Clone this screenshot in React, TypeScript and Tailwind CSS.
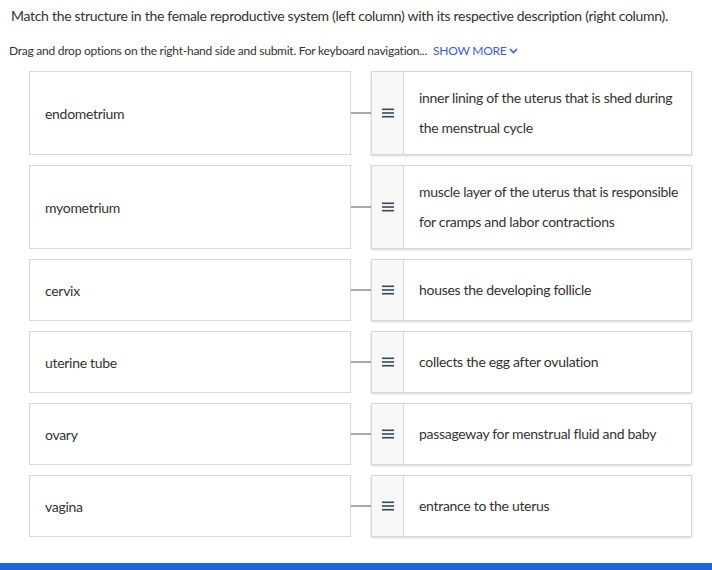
export default function App() {
  const rows = [
    { term: 'endometrium', desc: ['inner lining of the uterus that is shed during', 'the menstrual cycle'] },
    { term: 'myometrium', desc: ['muscle layer of the uterus that is responsible', 'for cramps and labor contractions'] },
    { term: 'cervix', desc: ['houses the developing follicle'] },
    { term: 'uterine tube', desc: ['collects the egg after ovulation'] },
    { term: 'ovary', desc: ['passageway for menstrual fluid and baby'] },
    { term: 'vagina', desc: ['entrance to the uterus'] },
  ]

  return (
    <div className="w-[712px] h-[570px] bg-white relative overflow-hidden text-[#333] font-['Lato','Liberation_Sans',sans-serif]">
      <p className="pl-[11px] pt-[7px] text-[14px] leading-[18px] tracking-[-0.3px] whitespace-nowrap">
        Match the structure in the female reproductive system (left column) with its respective description (right column).
      </p>
      <p className="pl-[9px] mt-[18px] text-[12px] leading-[16px] tracking-[-0.25px] flex items-center whitespace-nowrap">
        Drag and drop options on the right-hand side and submit. For keyboard navigation...
        <span className="ml-[6px] text-[#3b5fd0] flex items-center gap-[3px]">
          SHOW MORE
          <svg width="9" height="6" viewBox="0 0 9 6" fill="none">
            <path d="M1 1l3.5 3.5L8 1" stroke="#3b5fd0" strokeWidth="1.6" />
          </svg>
        </span>
      </p>
      <div className="mt-[12px] pl-[29px] flex flex-col gap-[10px]">
        {rows.map((row, i) => (
          <div key={i} className="flex items-stretch">
            <div className="w-[322px] border border-[#d6d8dc] flex items-center pl-[15px] text-[14px] tracking-[-0.3px]">
              {row.term}
            </div>
            <div className="w-[20px] flex items-center">
              <div className="h-[2px] w-full bg-[#a3acb4]"></div>
            </div>
            <div className="w-[321px] border border-[#d8d8d8] shadow-[0_1px_2px_rgba(0,0,0,0.18)] flex min-h-[62px]">
              <div className="w-[32px] bg-[#f7f7f7] border-r border-[#d8d8d8] flex items-center justify-center">
                <svg width="14" height="12" viewBox="0 0 14 12">
                  <rect x="1" y="1.5" width="12" height="1.6" fill="#3a4a58" />
                  <rect x="1" y="5.2" width="12" height="1.6" fill="#3a4a58" />
                  <rect x="1" y="8.9" width="12" height="1.6" fill="#3a4a58" />
                </svg>
              </div>
              <div className="flex-1 flex flex-col justify-center pl-[15px] py-[11px] text-[14px] leading-[30px] tracking-[-0.3px] whitespace-nowrap">
                {row.desc.map((d, j) => (
                  <span key={j}>{d}</span>
                ))}
              </div>
            </div>
          </div>
        ))}
      </div>
      <div className="absolute left-0 bottom-0 w-full h-[7px] bg-[#2163d6]"></div>
    </div>
  )
}
